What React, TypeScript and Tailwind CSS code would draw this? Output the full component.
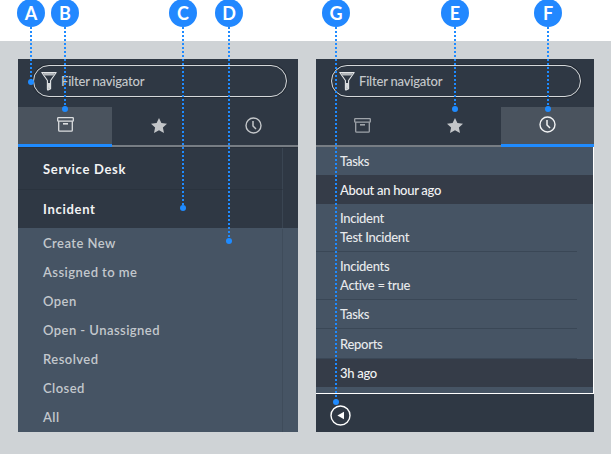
const menuItems = ['Create New', 'Assigned to me', 'Open', 'Open - Unassigned', 'Resolved', 'Closed', 'All'];

const callouts = [
  { label: 'A', x: 31, end: 82 },
  { label: 'B', x: 65, end: 109 },
  { label: 'C', x: 183, end: 208 },
  { label: 'D', x: 229, end: 241 },
  { label: 'G', x: 336, end: 402 },
  { label: 'E', x: 455, end: 109 },
  { label: 'F', x: 548, end: 109 },
];

function FilterIcon() {
  return (
    <svg width="16" height="20" viewBox="0 0 16 20" fill="none" className="shrink-0">
      <path d="M0.8 1.5h14.4L9.6 9.5v8.2l-2.6 1.4-0.6-1V9.5z" stroke="#e4e6e8" strokeWidth="1.1" strokeLinejoin="round" />
      <path d="M2 2h12l-1.6 2.4H3.6z" fill="#b4b8bc" />
      <path d="M6.8 12h2.4v5.4l-2 1z" fill="#d5d8da" />
    </svg>
  );
}

function ArchiveIcon({ color }: { color: string }) {
  return (
    <svg width="17" height="15" viewBox="0 0 17 15" fill="none">
      <rect x="0.7" y="0.7" width="15.6" height="3.4" rx="0.6" stroke={color} strokeWidth="1.3" />
      <path d="M1.7 4.2V13.2a1 1 0 0 0 1 1h11.6a1 1 0 0 0 1-1V4.2" stroke={color} strokeWidth="1.3" />
      <path d="M6 6.8h5" stroke={color} strokeWidth="1.6" />
    </svg>
  );
}

function StarIcon() {
  return (
    <svg width="16" height="15" viewBox="0 0 16 15">
      <path d="M8 0l2.4 5 5.6.7-4.1 3.8 1.1 5.5L8 12.3 3 15l1.1-5.5L0 5.7 5.6 5z" fill="#c3c6c9" />
    </svg>
  );
}

function ClockIcon({ color }: { color: string }) {
  return (
    <svg width="17" height="17" viewBox="0 0 17 17" fill="none">
      <circle cx="8.5" cy="8.5" r="7.5" stroke={color} strokeWidth="1.4" />
      <path d="M8 4v5l3 3" stroke={color} strokeWidth="1.5" />
    </svg>
  );
}

function SearchBar({ width }: { width: string }) {
  return (
    <div className="flex h-[48px] items-start pl-[15px] pt-[6px]">
      <div className={`${width} flex h-[32px] items-center gap-[4px] rounded-full border border-[#d5d8da] pl-[7px] shadow-[0_0_0_1px_#252c36]`}>
        <FilterIcon />
        <span className="pt-[2px] text-[13px] font-medium tracking-[-0.2px] text-[#c5c8cb]">Filter navigator</span>
      </div>
    </div>
  );
}

function Tab({ active, className = '', children }: { active: boolean; className?: string; children: React.ReactNode }) {
  return (
    <div className={`flex h-[40px] items-center justify-center pb-[2px] ${active ? 'border-b-[3px] border-[#1f8bff] bg-[#4a535e]' : 'border-b-[2px] border-[#777d84]'} ${className}`}>
      {children}
    </div>
  );
}

function LeftPanel() {
  return (
    <div className="flex h-[373px] w-[280px] flex-col overflow-hidden bg-[#2f3844]">
      <SearchBar width="w-[254px]" />
      <div className="flex">
        <Tab active className="w-[94px]"><ArchiveIcon color="#dcdee0" /></Tab>
        <Tab active={false} className="w-[93px]"><StarIcon /></Tab>
        <Tab active={false} className="w-[93px] pl-[3px]"><ClockIcon color="#c3c6c9" /></Tab>
      </div>
      <div className="flex flex-1 flex-col border-t border-[#29313c]">
        <div className="mr-[15px] flex h-[42px] items-center border-b border-r border-b-[#2a333e] border-r-[#3a4552] pl-[25px] pt-[2px] text-[13px] font-bold tracking-[0.7px] text-[#f2f3f4]">
          Service Desk
        </div>
        <div className="mr-[15px] flex h-[38px] items-center border-r border-[#3a4552] pl-[25px] pt-[1px] text-[13px] font-bold tracking-[0.7px] text-[#f2f3f4]">
          Incident
        </div>
        <div className="flex-1 bg-[#465464] pt-[1px]">
          <div className="mr-[15px] h-full border-r border-[#3f4c5b] pl-[25px]">
            {menuItems.map((item) => (
              <div key={item} className="flex h-[29px] items-center text-[13px] font-semibold tracking-[0.45px] text-[#c3c8cd]">
                {item}
              </div>
            ))}
          </div>
        </div>
      </div>
    </div>
  );
}

function RecentRow({ lines, height, border = true }: { lines: string[]; height: string; border?: boolean }) {
  return (
    <div className={`mr-[16px] flex flex-col justify-center pl-[24px] text-[13px] font-medium leading-[18.5px] tracking-[-0.3px] text-[#e8eaec] ${height} ${border ? 'border-b border-[#3a4756]' : ''}`}>
      {lines.map((line) => (
        <div key={line}>{line}</div>
      ))}
    </div>
  );
}

function GroupHeader({ height, children }: { height: string; children: React.ReactNode }) {
  return (
    <div className={`flex items-center bg-[#353c48] pl-[24px] pt-[2px] text-[13px] font-medium tracking-[-0.3px] text-[#f2f3f4] ${height}`}>{children}</div>
  );
}

function RightPanel() {
  return (
    <div className="flex h-[373px] w-[278px] flex-col overflow-hidden bg-[#2f3844]">
      <SearchBar width="w-[250px]" />
      <div className="flex">
        <Tab active={false} className="flex-1"><ArchiveIcon color="#9fa4aa" /></Tab>
        <Tab active={false} className="flex-1"><StarIcon /></Tab>
        <Tab active className="flex-1"><ClockIcon color="#f2f3f4" /></Tab>
      </div>
      <div className="h-[247px] border-r border-b border-white bg-[#465464]">
        <div className="flex h-[28px] items-center pl-[24px] pt-[2px] text-[13px] font-medium tracking-[-0.3px] text-[#e8eaec]">Tasks</div>
        <GroupHeader height="h-[29px]">About an hour ago</GroupHeader>
        <RecentRow lines={['Incident', 'Test Incident']} height="h-[48px]" />
        <RecentRow lines={['Incidents', 'Active = true']} height="h-[48px]" />
        <RecentRow lines={['Tasks']} height="h-[29px] pt-[1px]" />
        <RecentRow lines={['Reports']} height="h-[30px] pt-[2px]" />
        <GroupHeader height="h-[28px]">3h ago</GroupHeader>
      </div>
      <div className="flex flex-1 items-center pl-[14px] pt-[4px]">
        <svg width="21" height="21" viewBox="0 0 21 21" fill="none">
          <circle cx="10.5" cy="10.5" r="9.5" stroke="#ffffff" strokeWidth="1.4" />
          <path d="M14 6.8v7.4L7.4 10.5z" fill="#ffffff" />
        </svg>
      </div>
    </div>
  );
}

function Callout({ label, x, end }: { label: string; x: number; end: number }) {
  return (
    <>
      <svg className="absolute left-0 top-0" width="611" height="454" fill="none">
        <line x1={x} y1="27" x2={x} y2={end} stroke="#1f8bff" strokeWidth="2" strokeDasharray="2 2" />
        <circle cx={x} cy={end} r="3" fill="#1f8bff" />
        <circle cx={x} cy="13" r="14" fill="#2288ff" />
      </svg>
      <span
        className="absolute top-0 flex h-[27px] w-[28px] -translate-x-1/2 items-center justify-center text-[18px] font-bold text-white"
        style={{ left: x }}
      >
        {label}
      </span>
    </>
  );
}

export default function App() {
  return (
    <div className="relative flex h-[454px] w-[611px] flex-col overflow-hidden bg-white font-['Lato','Noto_Sans',sans-serif]">
      <div className="h-[41px]" />
      <div className="flex flex-1 gap-[18px] bg-[#cfd3d6] pl-[18px] pt-[18px]">
        <LeftPanel />
        <RightPanel />
      </div>
      {callouts.map((callout) => (
        <Callout key={callout.label} {...callout} />
      ))}
    </div>
  );
}
